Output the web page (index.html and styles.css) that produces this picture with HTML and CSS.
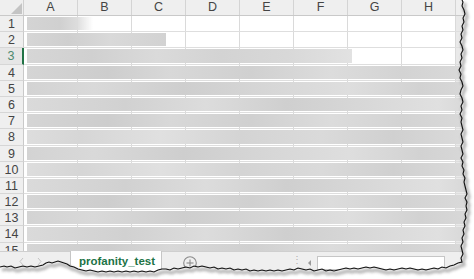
FILE: index.html
```html
<!DOCTYPE html>
<html>
<head>
<meta charset="utf-8">
<link rel="stylesheet" href="styles.css">
</head>
<body>
<div class="sheet">
  <div class="grid">
    <div class="colhead">
      <div class="corner"><svg width="24" height="16" viewBox="0 0 24 16"><polygon points="22,3 22,14 11,14" fill="#c4c4c4"/></svg></div>
      <div class="ch">A</div><div class="ch">B</div><div class="ch">C</div><div class="ch">D</div>
      <div class="ch">E</div><div class="ch">F</div><div class="ch">G</div><div class="ch">H</div>
      <div class="ch rest"></div>
    </div>
    <div class="row"><div class="rh">1</div><div class="cells"><div class="bar b1"></div></div></div>
    <div class="row"><div class="rh">2</div><div class="cells"><div class="bar b2"></div></div></div>
    <div class="row"><div class="rh active">3</div><div class="cells"><div class="bar b3"></div></div></div>
    <div class="row"><div class="rh">4</div><div class="cells"><div class="bar full v1"></div></div></div>
    <div class="row"><div class="rh">5</div><div class="cells"><div class="bar full v2"></div></div></div>
    <div class="row"><div class="rh">6</div><div class="cells"><div class="bar full v3"></div></div></div>
    <div class="row"><div class="rh">7</div><div class="cells"><div class="bar full v1"></div></div></div>
    <div class="row"><div class="rh">8</div><div class="cells"><div class="bar full v4"></div></div></div>
    <div class="row"><div class="rh">9</div><div class="cells"><div class="bar full v2"></div></div></div>
    <div class="row"><div class="rh">10</div><div class="cells"><div class="bar full v4"></div></div></div>
    <div class="row"><div class="rh">11</div><div class="cells"><div class="bar full v3"></div></div></div>
    <div class="row"><div class="rh">12</div><div class="cells"><div class="bar full v1"></div></div></div>
    <div class="row"><div class="rh">13</div><div class="cells"><div class="bar full v2"></div></div></div>
    <div class="row"><div class="rh">14</div><div class="cells"><div class="bar full v3"></div></div></div>
    <div class="row"><div class="rh">15</div><div class="cells"><div class="bar full v1"></div></div></div>
  </div>
  <div class="tabbar">
    <div class="nav">
      <svg width="70" height="20" viewBox="0 0 70 20"><polyline points="23,6 20,9.5 23,13" fill="none" stroke="#c4c4c4" stroke-width="1"/><polyline points="38,6 41,9.5 38,13" fill="none" stroke="#c4c4c4" stroke-width="1"/></svg>
    </div>
    <div class="tab">profanity_test</div>
    <div class="add">
      <svg width="16" height="16" viewBox="0 0 16 16"><circle cx="8" cy="8" r="6.3" fill="none" stroke="#8a8a8a" stroke-width="1.1"/><line x1="8" y1="4.5" x2="8" y2="11.5" stroke="#8a8a8a" stroke-width="1.1"/><line x1="4.5" y1="8" x2="11.5" y2="8" stroke="#8a8a8a" stroke-width="1.1"/></svg>
    </div>
    <div class="dots">⋮</div>
    <div class="hscroll">
      <div class="harrow"><svg width="12" height="12" viewBox="0 0 12 12"><polygon points="6,3 3,6 6,9" fill="#9a9a9a"/></svg></div>
      <div class="track"></div>
    </div>
  </div>
  <svg class="torn" width="474" height="279" viewBox="0 0 474 279">
    <defs>
      <filter id="sh" x="-10%" y="-10%" width="120%" height="120%"><feGaussianBlur stdDeviation="1.4"/></filter>
    </defs>
    <path fill="#ffffff" d="M0,279 L0,267 4,266 7,267 11,266 15,268 19,267 23,266 27,267 31,266 35,267 39,266 43,265 46,263 49,262 52,263 55,262 58,261 61,262 64,263 67,264 70,266 74,267 78,269 82,270 86,271 90,270 94,271 98,272 102,271 106,272 110,271 114,272 118,271 122,272 126,271 130,272 134,271 138,272 142,271 146,272 150,271 154,272 158,270 162,269 166,269 170,270 174,268 178,269 182,268 186,267 190,268 194,266 198,267 202,266 206,267 210,268 214,267 218,269 222,268 226,269 230,268 234,270 238,269 242,270 246,269 250,271 254,270 258,271 262,270 266,271 270,270 274,271 278,270 282,271 286,270 290,269 294,270 298,268 302,269 306,270 310,269 314,271 318,270 322,269 326,271 330,270 334,271 338,270 342,269 346,268 350,269 354,268 358,269 362,268 366,267 370,268 374,267 378,268 382,269 386,270 390,269 394,270 398,269 402,268 406,269 410,268 414,269 418,270 422,269 426,270 430,269 434,268 438,269 442,267 446,268 450,266 454,265 458,263 462,262 461,258 463,254 462,250 461,246 463,242 462,238 464,234 463,230 465,226 464,222 466,218 465,214 467,210 466,206 467,202 465,198 467,194 466,190 465,186 464,182 465,178 463,174 464,170 462,166 463,162 461,158 463,154 462,150 461,146 463,142 462,138 461,134 463,130 462,126 461,122 462,118 460,114 462,110 461,106 463,102 462,98 460,94 461,90 463,86 462,82 460,78 461,74 459,70 461,66 460,62 462,58 461,54 463,50 462,46 460,42 462,38 461,34 463,30 462,26 464,22 463,18 465,14 464,10 462,6 463,2 462,0 L474,0 L474,279 Z"/>
    <path class="shadow" filter="url(#sh)" transform="translate(2,3)" d="M0,267 4,266 7,267 11,266 15,268 19,267 23,266 27,267 31,266 35,267 39,266 43,265 46,263 49,262 52,263 55,262 58,261 61,262 64,263 67,264 70,266 74,267 78,269 82,270 86,271 90,270 94,271 98,272 102,271 106,272 110,271 114,272 118,271 122,272 126,271 130,272 134,271 138,272 142,271 146,272 150,271 154,272 158,270 162,269 166,269 170,270 174,268 178,269 182,268 186,267 190,268 194,266 198,267 202,266 206,267 210,268 214,267 218,269 222,268 226,269 230,268 234,270 238,269 242,270 246,269 250,271 254,270 258,271 262,270 266,271 270,270 274,271 278,270 282,271 286,270 290,269 294,270 298,268 302,269 306,270 310,269 314,271 318,270 322,269 326,271 330,270 334,271 338,270 342,269 346,268 350,269 354,268 358,269 362,268 366,267 370,268 374,267 378,268 382,269 386,270 390,269 394,270 398,269 402,268 406,269 410,268 414,269 418,270 422,269 426,270 430,269 434,268 438,269 442,267 446,268 450,266 454,265 458,263 462,262 461,258 463,254 462,250 461,246 463,242 462,238 464,234 463,230 465,226 464,222 466,218 465,214 467,210 466,206 467,202 465,198 467,194 466,190 465,186 464,182 465,178 463,174 464,170 462,166 463,162 461,158 463,154 462,150 461,146 463,142 462,138 461,134 463,130 462,126 461,122 462,118 460,114 462,110 461,106 463,102 462,98 460,94 461,90 463,86 462,82 460,78 461,74 459,70 461,66 460,62 462,58 461,54 463,50 462,46 460,42 462,38 461,34 463,30 462,26 464,22 463,18 465,14 464,10 462,6 463,2 462,0"/>
    <path class="line" d="M0,267 4,266 7,267 11,266 15,268 19,267 23,266 27,267 31,266 35,267 39,266 43,265 46,263 49,262 52,263 55,262 58,261 61,262 64,263 67,264 70,266 74,267 78,269 82,270 86,271 90,270 94,271 98,272 102,271 106,272 110,271 114,272 118,271 122,272 126,271 130,272 134,271 138,272 142,271 146,272 150,271 154,272 158,270 162,269 166,269 170,270 174,268 178,269 182,268 186,267 190,268 194,266 198,267 202,266 206,267 210,268 214,267 218,269 222,268 226,269 230,268 234,270 238,269 242,270 246,269 250,271 254,270 258,271 262,270 266,271 270,270 274,271 278,270 282,271 286,270 290,269 294,270 298,268 302,269 306,270 310,269 314,271 318,270 322,269 326,271 330,270 334,271 338,270 342,269 346,268 350,269 354,268 358,269 362,268 366,267 370,268 374,267 378,268 382,269 386,270 390,269 394,270 398,269 402,268 406,269 410,268 414,269 418,270 422,269 426,270 430,269 434,268 438,269 442,267 446,268 450,266 454,265 458,263 462,262 461,258 463,254 462,250 461,246 463,242 462,238 464,234 463,230 465,226 464,222 466,218 465,214 467,210 466,206 467,202 465,198 467,194 466,190 465,186 464,182 465,178 463,174 464,170 462,166 463,162 461,158 463,154 462,150 461,146 463,142 462,138 461,134 463,130 462,126 461,122 462,118 460,114 462,110 461,106 463,102 462,98 460,94 461,90 463,86 462,82 460,78 461,74 459,70 461,66 460,62 462,58 461,54 463,50 462,46 460,42 462,38 461,34 463,30 462,26 464,22 463,18 465,14 464,10 462,6 463,2 462,0"/>
  </svg>
</div>
</body>
</html>
```

FILE: styles.css
```css
html, body {
  margin: 0;
  padding: 0;
  background: #ffffff;
}
body {
  width: 474px;
  height: 279px;
  overflow: hidden;
  font-family: "Liberation Sans", Arial, sans-serif;
}
.sheet {
  position: relative;
  width: 474px;
  height: 279px;
  overflow: hidden;
}
.grid {
  height: 251px;
  overflow: hidden;
  display: flex;
  flex-direction: column;
}
.colhead {
  display: flex;
  height: 16px;
  flex: none;
  background: #efefef;
  border-bottom: 1px solid #c9c9c9;
  box-sizing: border-box;
}
.corner {
  width: 24px;
  flex: none;
  box-sizing: border-box;
  border-right: 1px solid #d0d0d0;
  line-height: 0;
}
.ch {
  width: 54px;
  flex: none;
  box-sizing: border-box;
  border-right: 1px solid #d4d4d4;
  text-align: center;
  font-size: 12.5px;
  line-height: 15px;
  color: #444444;
}
.ch.rest {
  flex: 1;
  border-right: none;
}
.row {
  display: flex;
  height: 16.2px;
  flex: none;
}
.rh {
  width: 24px;
  flex: none;
  box-sizing: border-box;
  background: #efefef;
  border-right: 1px solid #c9c9c9;
  border-bottom: 1px solid #d6d6d6;
  text-align: center;
  font-size: 12.5px;
  line-height: 16px;
  color: #444444;
}
.rh.active {
  color: #4e8a6e;
  border-right: 2px solid #217346;
  background: #e6e6e6;
}
.cells {
  flex: 1;
  display: flex;
  box-sizing: border-box;
  padding: 1px 0 1px 3px;
  border-bottom: 1px solid #dedede;
  background:
    linear-gradient(90deg, transparent 0 432px, #e9e9e9 432px 100%),
    repeating-linear-gradient(90deg, #ffffff 0 53px, #dadada 53px 54px);
}
.bar {
  height: 100%;
  filter: blur(0.6px);
  background: linear-gradient(90deg, #d5d5d5, #cdcdcd 18%, #d8d8d8 32%, #d0d0d0 50%, #dcdcdc 68%, #d3d3d3 84%, #dadada);
}
.bar.b1 {
  width: 66px;
  background: linear-gradient(90deg, #d4d4d4, #d0d0d0 50%, #dcdcdc 75%, rgba(255,255,255,0));
}
.bar.b2 {
  width: 139px;
  background: linear-gradient(90deg, #d6d6d6, #cfcfcf 30%, #d9d9d9 60%, #d2d2d2);
}
.bar.b3 {
  width: 325px;
  background: linear-gradient(90deg, #d6d6d6, #d0d0d0 20%, #dadada 40%, #d3d3d3 60%, #d8d8d8 80%, #e2e2e2);
}
.bar.full {
  flex: 1;
}
.bar.v2 {
  background: linear-gradient(90deg, #d3d3d3, #d9d9d9 15%, #cecece 35%, #d7d7d7 55%, #dedede 72%, #d2d2d2 88%, #d9d9d9);
}
.bar.v3 {
  background: linear-gradient(90deg, #dadada, #d1d1d1 22%, #dcdcdc 40%, #cfcfcf 58%, #d8d8d8 76%, #e0e0e0 92%, #d6d6d6);
}
.bar.v4 {
  background: linear-gradient(90deg, #dddddd, #d6d6d6 12%, #e0e0e0 30%, #d4d4d4 48%, #dadada 66%, #d0d0d0 82%, #dcdcdc);
}
.tabbar {
  display: flex;
  height: 28px;
  box-sizing: border-box;
  background: #efefef;
  border-top: 1px solid #cfcfcf;
}
.nav {
  width: 70px;
  flex: none;
  line-height: 0;
}
.tab {
  width: 92px;
  flex: none;
  box-sizing: border-box;
  background: #ffffff;
  border-left: 1px solid #c6c6c6;
  border-right: 1px solid #c6c6c6;
  margin-top: -1px;
  padding: 4px 0 0 8px;
  font-size: 11.5px;
  font-weight: bold;
  color: #217346;
}
.add {
  width: 130px;
  flex: none;
  padding: 3px 0 0 20px;
  box-sizing: border-box;
  line-height: 0;
}
.dots {
  width: 13px;
  flex: none;
  font-size: 10px;
  line-height: 14px;
  color: #b0b0b0;
  padding-top: 1px;
}
.hscroll {
  display: flex;
  flex: none;
  width: 148px;
  padding-top: 4px;
  box-sizing: border-box;
}
.harrow {
  width: 12px;
  height: 14px;
  line-height: 0;
  padding-top: 1px;
  box-sizing: border-box;
}
.track {
  width: 128px;
  height: 14px;
  background: #ffffff;
  border: 1px solid #c6c6c6;
  box-sizing: border-box;
}
.torn {
  position: absolute;
  left: 0;
  top: 0;
  pointer-events: none;
}
.torn .shadow {
  fill: none;
  stroke: #6a6a6a;
  stroke-width: 3;
  opacity: 0.55;
}
.torn .line {
  fill: none;
  stroke: #111111;
  stroke-width: 1.1;
}
```
